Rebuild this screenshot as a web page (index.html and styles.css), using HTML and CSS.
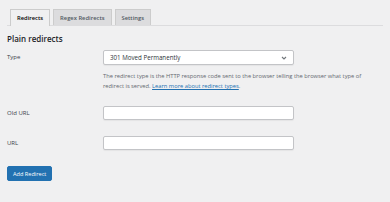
FILE: index.html
```
<!DOCTYPE html>
<html lang="en">
<head>
    <meta charset="UTF-8">
    <title>Redirects</title>
    <link rel="stylesheet" href="styles.css">
</head>
<body>
    <div class="wrap">
        <nav class="tabs">
            <a class="tab active" href="#">Redirects</a>
            <a class="tab" href="#">Regex Redirects</a>
            <a class="tab" href="#">Settings</a>
        </nav>

        <h2 class="title">Plain redirects</h2>

        <div class="row">
            <label class="label">Type</label>
            <div class="field">
                <div class="select">
                    <span>301 Moved Permanently</span>
                    <svg class="chevron" width="6" height="4" viewBox="0 0 6 4">
                        <path d="M1 1 L3 3 L5 1" fill="none" stroke="#72777c" stroke-width="1.1"/>
                    </svg>
                </div>
                <p class="help">The redirect type is the HTTP response code sent to the browser telling the browser what type of redirect is served. <a href="#">Learn more about redirect types</a>.</p>
            </div>
        </div>

        <div class="row">
            <label class="label">Old URL</label>
            <div class="field"><input class="input" type="text"></div>
        </div>

        <div class="row">
            <label class="label">URL</label>
            <div class="field"><input class="input" type="text"></div>
        </div>

        <button class="button">Add Redirect</button>
    </div>
</body>
</html>
```

FILE: styles.css
```
body {
    margin: 0;
    background: #f0f0f1;
    font-family: 'Open Sans', sans-serif;
    color: #3c434a;
    font-size: 6px;
}

.wrap {
    padding: 9px 7px 0 7px;
}

.tabs {
    display: flex;
    gap: 3px;
    padding-left: 3px;
    border-bottom: 1px solid #dcdcde;
    height: 16px;
}

.tab {
    display: flex;
    align-items: center;
    padding: 0 6px;
    height: 16px;
    border: 1px solid #ccc;
    border-bottom: none;
    background: #dcdcde;
    color: #50575e;
    font-size: 5.8px;
    font-weight: 600;
    text-decoration: none;
    box-sizing: border-box;
}

.tab.active {
    background: #f0f0f1;
    color: #000;
    height: 17px;
    margin-bottom: -1px;
}

.title {
    margin: 7px 0 0 0;
    font-size: 8px;
    font-weight: 600;
    color: #1d2327;
    line-height: 12px;
}

.row {
    display: flex;
    margin-top: 5px;
}

.row + .row {
    margin-top: 15px;
}

.row + .row + .row {
    margin-top: 16px;
}

.label {
    width: 96px;
    flex: none;
    line-height: 14px;
    color: #3c434a;
}

.field {
    width: 191px;
}

.select {
    display: flex;
    align-items: center;
    justify-content: space-between;
    height: 15px;
    padding: 0 6px 0 6px;
    background: #fff;
    border: 1px solid #c3c4c7;
    border-radius: 2px;
    box-shadow: 0 1px 1px rgba(0, 0, 0, 0.05);
    box-sizing: border-box;
    color: #2c3338;
    font-size: 6.2px;
}

.chevron {
    display: block;
}

.help {
    margin: 6px 0 0 0;
    width: 273px;
    line-height: 10px;
    color: #646970;
    font-size: 5.75px;
}

.help a {
    color: #2271b1;
}

.input {
    display: block;
    width: 100%;
    height: 14px;
    margin: 0;
    padding: 0;
    background: #fff;
    border: 1px solid #c3c4c7;
    border-radius: 2px;
    box-shadow: 0 1px 1px rgba(0, 0, 0, 0.05);
    box-sizing: border-box;
}

.button {
    display: block;
    margin-top: 16px;
    height: 15px;
    padding: 0 5px;
    background: #2271b1;
    border: 1px solid #2271b1;
    border-radius: 2px;
    color: #fff;
    font-family: 'Open Sans', sans-serif;
    font-size: 5.6px;
}
```
